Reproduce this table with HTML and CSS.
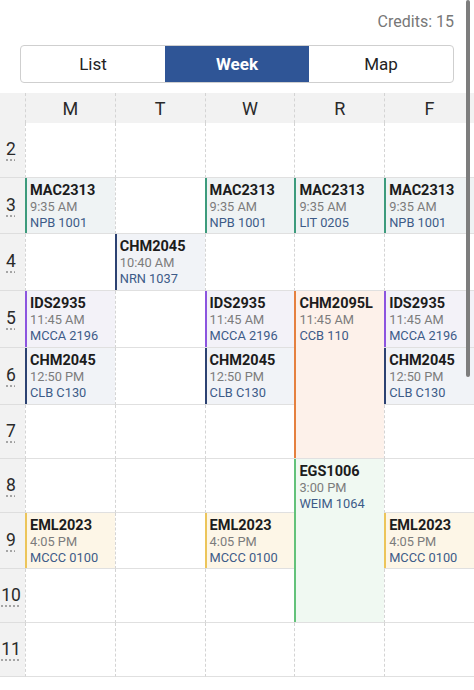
FILE: index.html
```html
<!DOCTYPE html>
<html>
<head>
<meta charset="utf-8">
<link rel="stylesheet" href="styles.css">
</head>
<body>
<div class="page">
  <div class="credits">Credits: 15</div>
  <div class="seg">
    <div class="seg-item">List</div>
    <div class="seg-item active">Week</div>
    <div class="seg-item">Map</div>
  </div>
  <div class="grid">
    <div class="row head h1">
      <div class="corner"></div>
      <div class="day">M</div><div class="day">T</div><div class="day">W</div><div class="day">R</div><div class="day">F</div>
    </div>
    <div class="row h2"><div class="hour"><span>2</span></div><div class="cell"></div><div class="cell"></div><div class="cell"></div><div class="cell"></div><div class="cell"></div></div>
    <div class="row h3"><div class="hour"><span>3</span></div><div class="cell"></div><div class="cell"></div><div class="cell"></div><div class="cell"></div><div class="cell"></div></div>
    <div class="row h4"><div class="hour"><span>4</span></div><div class="cell"></div><div class="cell"></div><div class="cell"></div><div class="cell"></div><div class="cell"></div></div>
    <div class="row h5"><div class="hour"><span>5</span></div><div class="cell"></div><div class="cell"></div><div class="cell"></div><div class="cell"></div><div class="cell"></div></div>
    <div class="row h6"><div class="hour"><span>6</span></div><div class="cell"></div><div class="cell"></div><div class="cell"></div><div class="cell"></div><div class="cell"></div></div>
    <div class="row h7"><div class="hour"><span>7</span></div><div class="cell"></div><div class="cell"></div><div class="cell"></div><div class="cell"></div><div class="cell"></div></div>
    <div class="row h8"><div class="hour"><span>8</span></div><div class="cell"></div><div class="cell"></div><div class="cell"></div><div class="cell"></div><div class="cell"></div></div>
    <div class="row h9"><div class="hour"><span>9</span></div><div class="cell"></div><div class="cell"></div><div class="cell"></div><div class="cell"></div><div class="cell"></div></div>
    <div class="row h10"><div class="hour"><span>10</span></div><div class="cell"></div><div class="cell"></div><div class="cell"></div><div class="cell"></div><div class="cell"></div></div>
    <div class="row h11"><div class="hour"><span>11</span></div><div class="cell"></div><div class="cell"></div><div class="cell"></div><div class="cell"></div><div class="cell"></div></div>

    <div class="ev mac d1 r3"><b>MAC2313</b><span class="t">9:35 AM</span><span class="l">NPB 1001</span></div>
    <div class="ev mac d3 r3"><b>MAC2313</b><span class="t">9:35 AM</span><span class="l">NPB 1001</span></div>
    <div class="ev mac d4 r3"><b>MAC2313</b><span class="t">9:35 AM</span><span class="l">LIT 0205</span></div>
    <div class="ev mac d5 r3"><b>MAC2313</b><span class="t">9:35 AM</span><span class="l">NPB 1001</span></div>

    <div class="ev chm d2 r4"><b>CHM2045</b><span class="t">10:40 AM</span><span class="l">NRN 1037</span></div>

    <div class="ev ids d1 r5"><b>IDS2935</b><span class="t">11:45 AM</span><span class="l">MCCA 2196</span></div>
    <div class="ev ids d3 r5"><b>IDS2935</b><span class="t">11:45 AM</span><span class="l">MCCA 2196</span></div>
    <div class="ev lab d4 r5 span3"><b>CHM2095L</b><span class="t">11:45 AM</span><span class="l">CCB 110</span></div>
    <div class="ev ids d5 r5"><b>IDS2935</b><span class="t">11:45 AM</span><span class="l">MCCA 2196</span></div>

    <div class="ev chm d1 r6"><b>CHM2045</b><span class="t">12:50 PM</span><span class="l">CLB C130</span></div>
    <div class="ev chm d3 r6"><b>CHM2045</b><span class="t">12:50 PM</span><span class="l">CLB C130</span></div>
    <div class="ev chm d5 r6"><b>CHM2045</b><span class="t">12:50 PM</span><span class="l">CLB C130</span></div>

    <div class="ev egs d4 r8 span3"><b>EGS1006</b><span class="t">3:00 PM</span><span class="l">WEIM 1064</span></div>

    <div class="ev eml d1 r9"><b>EML2023</b><span class="t">4:05 PM</span><span class="l">MCCC 0100</span></div>
    <div class="ev eml d3 r9"><b>EML2023</b><span class="t">4:05 PM</span><span class="l">MCCC 0100</span></div>
    <div class="ev eml d5 r9"><b>EML2023</b><span class="t">4:05 PM</span><span class="l">MCCC 0100</span></div>
  </div>
  <div class="scrollbar"></div>
</div>
</body>
</html>
```
FILE: styles.css
```css
* { box-sizing: border-box; }
html, body { margin: 0; padding: 0; background: #fff; }
body { font-family: Roboto, "Noto Sans", sans-serif; color: #222; }
.page { position: relative; width: 474px; height: 690px; overflow: hidden; }

.credits {
  padding: 12px 20px 0 0;
  height: 32px;
  line-height: 20px;
  font-size: 16px;
  color: #777;
  text-align: right;
}

.seg {
  margin: 13px 20px 0 20px;
  height: 38px;
  display: grid;
  grid-template-columns: 1fr 1fr 1fr;
  border: 1px solid #cfcfcf;
  border-radius: 4px;
  overflow: hidden;
}
.seg-item {
  display: flex;
  align-items: center;
  justify-content: center;
  font-size: 17px;
  color: #222;
}
.seg-item.active { background: #2f5596; color: #fff; font-weight: 700; }

.grid {
  margin-top: 10px;
  display: grid;
  grid-template-columns: 25px repeat(5, 1fr);
  grid-template-rows: 30px 55px 56px 57px 57px 57px 54px 54px 56px 54px 54px;
}
.row {
  grid-column: 1 / -1;
  display: grid;
  grid-template-columns: 25px repeat(5, 1fr);
}
.h1 { grid-row: 1; }
.h2 { grid-row: 2; }
.h3 { grid-row: 3; }
.h4 { grid-row: 4; }
.h5 { grid-row: 5; }
.h6 { grid-row: 6; }
.h7 { grid-row: 7; }
.h8 { grid-row: 8; }
.h9 { grid-row: 9; }
.h10 { grid-row: 10; }
.h11 { grid-row: 11; }

.head { background: #f2f2f2; }
.day {
  border-left: 1px dashed #d4d4d4;
  display: flex;
  align-items: center;
  justify-content: center;
  font-size: 18px;
  color: #2a2a2a;
}
.hour {
  background: #f2f2f2;
  border-bottom: 1px solid #dedede;
  display: flex;
  align-items: center;
  justify-content: center;
  padding-right: 3px;
  padding-bottom: 2px;
}
.hour span {
  font-size: 17.5px;
  color: #2a2a2a;
  line-height: 20px;
  text-decoration: underline dotted #9a9a9a;
  text-underline-offset: 5px;
}
.cell {
  border-left: 1px dashed #d4d4d4;
  border-bottom: 1px solid #e0e0e0;
}

.ev {
  margin-bottom: 1px;
  border-left: 2px solid;
  padding: 5px 0 0 3px;
  display: flex;
  flex-direction: column;
  line-height: 16px;
  overflow: hidden;
  white-space: nowrap;
}
.ev b { font-size: 14.5px; font-weight: 700; color: #1c1c1c; }
.ev .t { font-size: 12.8px; color: #7c7c7c; }
.ev .l { font-size: 12.8px; color: #3d5b88; }

.d1 { grid-column: 2; }
.d2 { grid-column: 3; }
.d3 { grid-column: 4; }
.d4 { grid-column: 5; }
.d5 { grid-column: 6; }
.r3 { grid-row: 3; }
.r4 { grid-row: 4; }
.r5 { grid-row: 5; }
.r6 { grid-row: 6; }
.r8 { grid-row: 8; }
.r9 { grid-row: 9; }
.r5.span3 { grid-row: 5 / span 3; }
.r8.span3 { grid-row: 8 / span 3; }

.mac { border-left-color: #3d9b7c; background: #eff3f4; }
.chm { border-left-color: #2c4272; background: #f1f3f7; }
.ids { border-left-color: #8c55df; background: #f3f2f8; }
.lab { border-left-color: #e5803f; background: #fdf1ea; }
.egs { border-left-color: #63c27a; background: #f0f9f2; }
.eml { border-left-color: #ecc55a; background: #fdf6e7; }

.scrollbar {
  position: absolute;
  left: 466px;
  top: 0;
  width: 4px;
  height: 377px;
  background: #7d7d7d;
  border-radius: 2px;
}
```
